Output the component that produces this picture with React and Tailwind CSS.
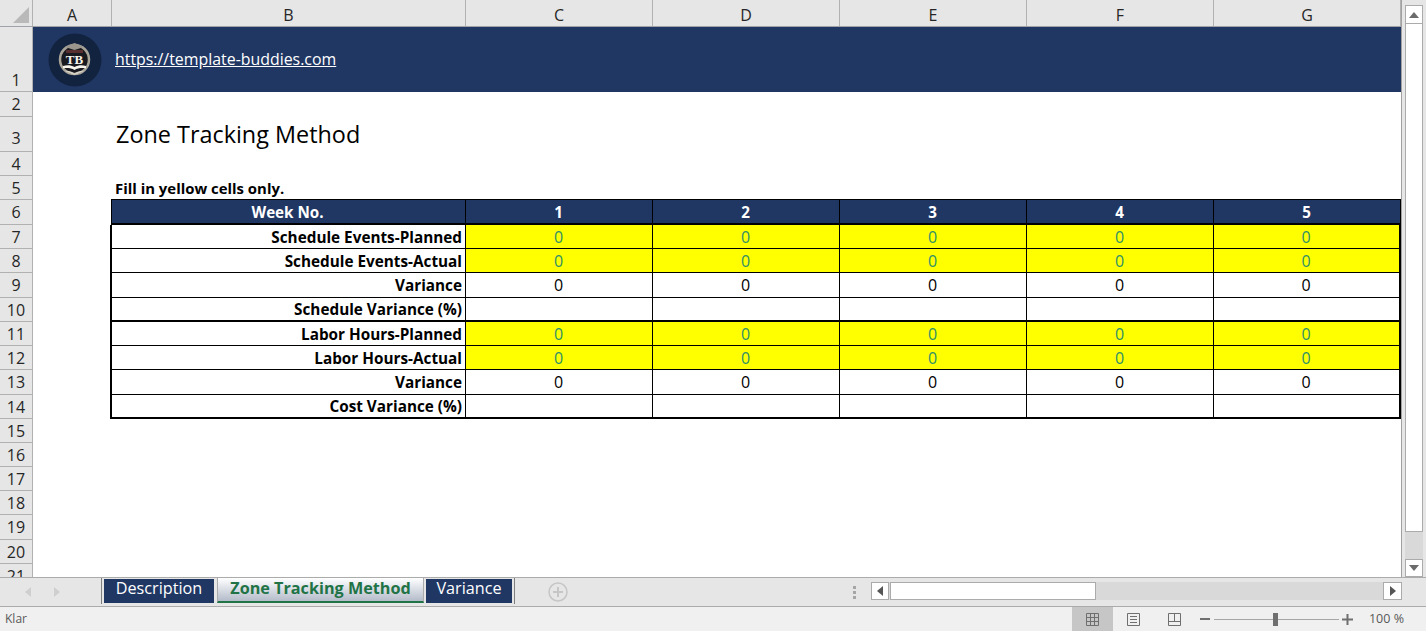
const font = { fontFamily: '"Open Sans", sans-serif' };

const columns = ["C", "D", "E", "F", "G"];
const columnHeads = [
  { label: "A", w: "w-[79px]" },
  { label: "B", w: "w-[354px]" },
  { label: "C", w: "w-[187px]" },
  { label: "D", w: "w-[187px]" },
  { label: "E", w: "w-[187px]" },
  { label: "F", w: "w-[187px]" },
  { label: "G", w: "w-[187px]" },
];

const tableRows = [
  { n: 7, h: "h-[24px]", label: "Schedule Events-Planned", kind: "input", pad: "pt-[1px]" },
  { n: 8, h: "h-[24px]", label: "Schedule Events-Actual", kind: "input", pad: "pt-[1px]" },
  { n: 9, h: "h-[25px]", label: "Variance", kind: "value", pad: "" },
  { n: 10, h: "h-[24px]", label: "Schedule Variance (%)", kind: "empty", thick: true, pad: "" },
  { n: 11, h: "h-[24px]", label: "Labor Hours-Planned", kind: "input", pad: "pt-[1px]" },
  { n: 12, h: "h-[24px]", label: "Labor Hours-Actual", kind: "input", pad: "pt-[1px]" },
  { n: 13, h: "h-[25px]", label: "Variance", kind: "value", pad: "" },
  { n: 14, h: "h-[24px]", label: "Cost Variance (%)", kind: "empty", thick: true, pad: "" },
];

const trailing = [
  { n: 15, h: "h-[24px]" },
  { n: 16, h: "h-[24px]" },
  { n: 17, h: "h-[24px]" },
  { n: 18, h: "h-[24px]" },
  { n: 19, h: "h-[25px]" },
  { n: 20, h: "h-[24px]" },
  { n: 21, h: "h-[24px]" },
];

function RowHead({ n, align = "items-center" }) {
  return (
    <div className={`w-[33px] shrink-0 flex justify-center ${align} bg-[#e6e6e6] border-b border-r border-[#b1b1b1] text-[16px] text-[#262626]`}>
      {n}
    </div>
  );
}

function Logo() {
  return (
    <svg width="54" height="54" viewBox="0 0 54 54">
      <circle cx="27" cy="27" r="26.5" fill="#12233f" />
      <circle cx="26.5" cy="26.5" r="14.5" fill="#191a20" stroke="#a9a498" strokeWidth="2.5" />
      <path d="M17 14l9.5-4 9.5 4-9.5 3z" fill="#9a968e" />
      <path d="M18 17h17v3H18z" fill="#5a2f30" />
      <text x="26.5" y="31" textAnchor="middle" fontSize="13" fontWeight="700" fill="#f7f4ec" fontFamily="Liberation Serif, serif">TB</text>
      <path d="M15 33c4-1.500 8-1 11.500 1 3.500-2 7.500-2.500 11.500-1v2.500c-4-1-8-.5-11.500 1.500-3.500-2-7.500-2.500-11.500-1.500z" fill="#f7f4ec" />
      <path d="M17 38c3.500-.5 6.500 .5 9.500 2.500 3-2 6-3 9.500-2.500l-9.500 4z" fill="#d8d3c8" />
    </svg>
  );
}

function Arrow({ dir, color = "#6b6b6b" }) {
  const d = {
    up: "M0 6 5 0 10 6z",
    down: "M0 0 5 6 10 0z",
    left: "M6 0 0 5 6 10z",
    right: "M0 0 6 5 0 10z",
  }[dir];
  const size = dir === "up" || dir === "down" ? [10, 6] : [6, 10];
  return (
    <svg width={size[0]} height={size[1]} viewBox={`0 0 ${size[0]} ${size[1]}`}>
      <path d={d} fill={color} />
    </svg>
  );
}

function Sheet() {
  return (
    <div className="flex-1 min-w-0 overflow-hidden bg-white border-r border-[#a0a0a0]">
      {/* column headers */}
      <div className="flex h-[27px] bg-[#e6e6e6] border-b border-[#9fa3a8]">
        <div className="w-[33px] shrink-0 flex items-end justify-end p-[3px] border-r border-[#b1b1b1]">
          <svg width="16" height="16" viewBox="0 0 16 16">
            <path d="M16 0v16H0z" fill="#b9b9b9" />
          </svg>
        </div>
        {columnHeads.map((c) => (
          <div key={c.label} className={`${c.w} shrink-0 flex items-center justify-center pt-[3px] border-r border-[#b1b1b1] text-[16px] text-[#262626]`}>
            {c.label}
          </div>
        ))}
      </div>

      {/* row 1 banner */}
      <div className="flex h-[65px]">
        <div className="w-[33px] shrink-0 flex justify-center items-end bg-[#e6e6e6] border-b border-r border-[#b1b1b1] text-[16px] leading-[21px] text-[#262626]">
          1
        </div>
        <div className="flex-1 bg-[#203764] flex items-center pl-[15px] gap-[13px]">
          <Logo />
          <a className="pt-[1px] text-[15.9px] text-white underline">https://template-buddies.com</a>
        </div>
      </div>

      <div className="flex h-[25px]">
        <RowHead n={2} />
      </div>

      {/* row 3 title */}
      <div className="flex h-[35px]">
        <div className="w-[33px] shrink-0 flex justify-center items-end pb-[1px] bg-[#e6e6e6] border-b border-r border-[#b1b1b1] text-[16px] text-[#262626]">
          3
        </div>
        <div className="pl-[83px] flex items-center pt-[1px] text-[23.4px] text-black">Zone Tracking Method</div>
      </div>

      <div className="flex h-[24px]">
        <RowHead n={4} />
      </div>

      {/* row 5 note */}
      <div className="flex h-[24px]">
        <RowHead n={5} />
        <div className="pl-[82px] flex items-end pb-[1px] text-[14.9px] font-bold text-black leading-[22px]">Fill in yellow cells only.</div>
      </div>

      {/* row 6 table head */}
      <div className="flex h-[25px]">
        <RowHead n={6} />
        <div className="w-[78px] shrink-0" />
        <div className="flex flex-1 -mt-[1px] bg-[#203764] border-t border-b-2 border-black text-white font-bold text-[15.2px]">
          <div className="w-[355px] shrink-0 flex items-center justify-center pt-[1px] pr-[2px] border-r border-l border-black">Week No.</div>
          {columns.map((c, i) => (
            <div key={c} className="w-[187px] shrink-0 flex items-center justify-center pt-[1px] pr-[1px] border-r border-black">
              {i + 1}
            </div>
          ))}
        </div>
      </div>

      {/* rows 7-14 */}
      {tableRows.map((r) => (
        <div key={r.n} className={`flex ${r.h}`}>
          <RowHead n={r.n} />
          <div className="w-[77px] shrink-0" />
          <div className={`flex flex-1 border-black ${r.thick ? "border-b-2" : "border-b"}`}>
            <div className={`w-[356px] shrink-0 flex items-center justify-end pr-[3px] ${r.pad} border-l-2 border-r border-black font-bold text-[15.3px] text-black`}>
              {r.label}
            </div>
            {columns.map((c, i) => (
              <div
                key={c}
                className={`w-[187px] shrink-0 flex items-center justify-center pr-[1px] text-[16px] ${
                  r.kind === "input" ? "bg-[#ffff00] text-[#2f9068]" : "bg-white text-black"
                } ${i === 4 ? "border-r-2" : "border-r"} border-black`}
              >
                {r.kind === "empty" ? "" : "0"}
              </div>
            ))}
          </div>
        </div>
      ))}

      {trailing.map((r) => (
        <div key={r.n} className={`flex ${r.h}`}>
          <RowHead n={r.n} />
        </div>
      ))}
    </div>
  );
}

function VerticalScroll() {
  return (
    <div className="w-[24px] shrink-0 bg-[#e6e6e6] pt-[5px] pl-[3px] pr-[3px] flex flex-col">
      <div className="h-[19px] shrink-0 bg-white border border-[#ababab] flex items-center justify-center">
        <Arrow dir="up" />
      </div>
      <div className="flex-1 bg-white border border-[#ababab] border-t-0" />
      <div className="h-[27px] shrink-0 bg-[#d9d9d9]" />
      <div className="h-[18px] shrink-0 bg-white border border-[#ababab] flex items-center justify-center">
        <Arrow dir="down" />
      </div>
    </div>
  );
}

function TabBar() {
  return (
    <div className="h-[30px] shrink-0 bg-[#e6e6e6] border-t border-b border-[#ababab] flex">
      <div className="w-[101px] shrink-0 flex items-center pl-[25px] gap-[23px]">
        <Arrow dir="left" color="#cfcfcf" />
        <Arrow dir="right" color="#cfcfcf" />
      </div>
      <div className="w-[1px] h-[26px] shrink-0 bg-[#7f7f7f]" />
      <div className="w-[110px] h-[24px] shrink-0 ml-[2px] mt-[1px] bg-[#203764] text-white text-[16.2px] flex items-center justify-center pb-[5px] leading-none">
        Description
      </div>
      <div className="w-[207px] h-[26px] shrink-0 ml-[3px] -mt-[1px] border-l border-r border-t border-[#ababab] border-b-2 border-b-[#217346] bg-gradient-to-b from-white to-[#b4bcca] text-[#217346] font-bold text-[16.2px] flex items-center justify-center pb-[3px] leading-none">
        Zone Tracking Method
      </div>
      <div className="w-[86px] h-[24px] shrink-0 ml-[2px] mt-[1px] bg-[#203764] text-white text-[16.2px] flex items-center justify-center pb-[5px] leading-none">
        Variance
      </div>
      <div className="w-[1px] h-[26px] shrink-0 ml-[2px] bg-[#7f7f7f]" />
      <div className="ml-[33px] flex items-center">
        <svg width="20" height="20" viewBox="0 0 20 20" fill="none" stroke="#c6c6c6" strokeWidth="1.5">
          <circle cx="10" cy="10" r="9" />
          <path d="M10 5v10M5 10h10" strokeWidth="2" />
        </svg>
      </div>
      <div className="flex-1 flex items-center justify-end">
        <div className="flex flex-col gap-[2px] mr-[15px]">
          <div className="w-[3px] h-[3px] bg-[#a6a6a6]" />
          <div className="w-[3px] h-[3px] bg-[#a6a6a6]" />
          <div className="w-[3px] h-[3px] bg-[#a6a6a6]" />
        </div>
      </div>
      <div className="w-[531px] shrink-0 h-[18px] mt-[4px] mr-[24px] flex bg-[#d9d9d9]">
        <div className="w-[18px] bg-white border border-[#ababab] flex items-center justify-center">
          <Arrow dir="left" color="#555555" />
        </div>
        <div className="w-[206px] ml-[1px] bg-white border border-[#ababab]" />
        <div className="flex-1" />
        <div className="w-[19px] bg-white border border-[#ababab] flex items-center justify-center">
          <Arrow dir="right" color="#555555" />
        </div>
      </div>
    </div>
  );
}

function StatusBar() {
  return (
    <div className="flex-1 bg-[#f0f0f0] flex items-center text-[#595959] text-[12px]">
      <span className="pl-[5px]">Klar</span>
      <div className="ml-auto flex items-center h-full">
        <div className="w-[41px] h-full bg-[#c6c6c6] flex items-center justify-center">
          <svg width="13" height="13" viewBox="0 0 13 13" fill="none" stroke="#6f6f6f">
            <path d="M.5.5h12v12H.5zM4.5.5v12M8.5.5v12M.5 4.5h12M.5 8.5h12" />
          </svg>
        </div>
        <div className="w-[41px] flex justify-center">
          <svg width="13" height="13" viewBox="0 0 13 13" fill="none" stroke="#6f6f6f">
            <path d="M.5.5h12v12H.5zM3 3.500h7M3 6.500h7M3 9.500h7" />
          </svg>
        </div>
        <div className="w-[41px] flex justify-center">
          <svg width="13" height="13" viewBox="0 0 13 13" fill="none" stroke="#6f6f6f">
            <path d="M.5.5h12v12H.5zM.5 8.500h12M6.500.5v8" />
          </svg>
        </div>
        <div className="flex items-center ml-[5px]">
          <div className="w-[10px] h-[2px] bg-[#6f6f6f]" />
          <div className="relative w-[125px] h-[1px] ml-[4px] bg-[#a6a6a6]">
            <div className="absolute left-[59px] -top-[6px] w-[5px] h-[13px] bg-[#6f6f6f]" />
          </div>
          <svg className="ml-[3px]" width="11" height="11" viewBox="0 0 11 11" fill="none" stroke="#6f6f6f" strokeWidth="2">
            <path d="M5.500 0v11M0 5.500h11" />
          </svg>
        </div>
        <div className="w-[73px] text-right pr-[22px] text-[12.5px]">100 %</div>
      </div>
    </div>
  );
}

export default function App() {
  return (
    <div className="w-[1426px] h-[631px] flex flex-col overflow-hidden bg-[#e6e6e6]" style={font}>
      <div className="h-[577px] shrink-0 flex overflow-hidden">
        <Sheet />
        <VerticalScroll />
      </div>
      <TabBar />
      <StatusBar />
    </div>
  );
}
